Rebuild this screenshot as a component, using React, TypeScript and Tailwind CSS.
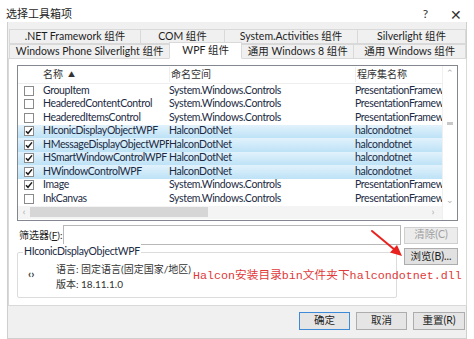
import React from 'react';

const ui = "font-['Lato','Noto_Sans_CJK_SC',sans-serif]";

const rows: [string, string, string, boolean][] = [
  ['GroupItem', 'System.Windows.Controls', 'PresentationFramewo', false],
  ['HeaderedContentControl', 'System.Windows.Controls', 'PresentationFramewo', false],
  ['HeaderedItemsControl', 'System.Windows.Controls', 'PresentationFramewo', false],
  ['HIconicDisplayObjectWPF', 'HalconDotNet', 'halcondotnet', true],
  ['HMessageDisplayObjectWPF', 'HalconDotNet', 'halcondotnet', true],
  ['HSmartWindowControlWPF', 'HalconDotNet', 'halcondotnet', true],
  ['HWindowControlWPF', 'HalconDotNet', 'halcondotnet', true],
  ['Image', 'System.Windows.Controls', 'PresentationFramewo', false],
  ['InkCanvas', 'System.Windows.Controls', 'PresentationFramewo', false],
];

const Check = ({ on }: { on: boolean }) => (
  <div className="w-[10px] h-[10px] border border-[#8a8a8a] bg-white flex items-center justify-center">
    {on && (
      <svg width="8" height="8" viewBox="0 0 8 8"><path d="M1 4.2 L3 6.3 L7 1.4" fill="none" stroke="#1b1b1b" strokeWidth="1.5" /></svg>
    )}
  </div>
);

const Tab = ({ l, w, sel }: { l: string; w: string; sel?: boolean }) => (
  <div className={`${w} flex items-center justify-center border border-[#d9d9d9] -ml-px ${sel ? 'bg-white border-b-white h-[17px] -mt-[2px] relative z-10' : 'bg-[#f0f0f0] h-[15px]'}`}>
    <span className="text-[10.5px] text-[#1e1e1e] whitespace-nowrap">{l}</span>
  </div>
);

const Btn = ({ l, w, dis, def, hl }: { l: string; w: string; dis?: boolean; def?: boolean; hl?: boolean }) => (
  <div className={`${w} flex items-center justify-center border text-[10.5px] ${def ? 'border-[#3c8ad8] bg-[#e5e5e5]' : 'border-[#adadad]'} ${hl ? 'bg-[#e1e1e1]' : 'bg-[#e5e5e5]'} ${dis ? 'text-[#a0a0a0] border-[#cfcfcf] bg-[#ececec]' : 'text-[#1e1e1e]'}`}>
    {l}
  </div>
);

export default function App() {
  return (
    <div className={`w-[474px] h-[339px] overflow-hidden bg-white relative ${ui}`}>
      {/* title bar */}
      <div className="h-[22px] flex items-center pl-[6px] pr-[12px] text-[11px] text-[#1e1e1e]">
        <span className="flex-1 mt-[6px]">选择工具箱项</span>
        <span className="mt-[6px] text-[12px] text-[#333] mr-[22px]">?</span>
        <span className="mt-[6px] text-[14px] text-[#333]">✕</span>
      </div>

      {/* body */}
      <div className="ml-[7px] mr-[7px] h-[317px] bg-[#f0f0f0] border-l border-r border-b border-[#cfcfcf] flex flex-col">
        {/* tabs */}
        <div className="mt-[7px] flex pl-[2px]">
          <Tab l=".NET Framework 组件" w="w-[132px]" />
          <Tab l="COM 组件" w="w-[85px]" />
          <Tab l="System.Activities 组件" w="w-[134px]" />
          <Tab l="Silverlight 组件" w="w-[109px]" />
        </div>
        <div className="flex items-end -mt-px h-[16px]">
          <Tab l="Windows Phone Silverlight 组件" w="w-[162px] ml-px" />
          <Tab l="WPF 组件" w="w-[73px]" sel />
          <Tab l="通用 Windows 8 组件" w="w-[114px]" />
          <Tab l="通用 Windows 组件" w="w-[113px]" />
        </div>

        {/* panel */}
        <div className="-mt-px w-[459px] h-[248px] bg-white border border-[#d9d9d9] flex flex-col px-[8px] pt-[6px]">
          {/* list */}
          <div className="h-[156px] border border-[#828790] flex">
            <div className="flex-1 flex flex-col min-w-0">
              <div className="h-[18px] flex items-center text-[10px] text-[#333] border-b border-[#eeeeee]">
                <div className="w-[25px]" />
                <div className="w-[126px] flex items-center gap-[5px]">名称<span className="text-[7px]">▲</span></div>
                <div className="w-[186px] border-l border-[#eeeeee] pl-px">命名空间</div>
                <div className="flex-1 border-l border-[#eeeeee] pl-px">程序集名称</div>
              </div>
              {rows.map(([n, ns, a, s]) => (
                <div key={n} className={`h-[13.5px] flex items-center text-[10.5px] tracking-[-0.35px] text-[#1c2b44] whitespace-nowrap ${s ? 'bg-gradient-to-b from-[#e2f2fc] to-[#bde2f6]' : ''}`}>
                  <div className="w-[25px] flex pl-[6px]"><Check on={s || n === 'Image'} /></div>
                  <div className="w-[126px] overflow-hidden">{n}</div>
                  <div className="w-[186px] overflow-hidden">{ns}</div>
                  <div className="flex-1 overflow-hidden">{a}</div>
                </div>
              ))}
              <div className="h-[13px] flex items-center bg-[#f4f4f4]">
                <span className="w-[12px] text-center text-[9px] text-[#a0a0a0]">‹</span>
                <div className="w-[178px] h-[10px] bg-[#d6d6d6]" />
                <div className="flex-1" />
                <span className="w-[12px] text-center text-[9px] text-[#a0a0a0] mr-[3px]">›</span>
              </div>
            </div>
            <div className="w-[15px] flex flex-col items-center bg-white border-l border-[#f0f0f0]">
              <span className="text-[9px] text-[#b0b0b0] mt-[2px] leading-none">⌃</span>
              <div className="mt-[45px] w-[6px] h-[3px] bg-[#c8c8c8]" />
              <div className="flex-1" />
              <span className="text-[9px] text-[#b0b0b0] mb-[16px] leading-none">⌄</span>
            </div>
          </div>

          {/* filter */}
          <div className="mt-[4px] flex items-center h-[20px]">
            <span className="w-[46px] text-[10px] text-[#1e1e1e] pl-[2px] whitespace-nowrap">筛选器(<u>F</u>):</span>
            <div className="w-[338px] h-[20px] border border-[#b8b8b8] bg-white" />
            <div className="ml-[3px] h-[17px] flex"><Btn l="清除(C)" w="w-[54px]" dis /></div>
          </div>

          {/* details + browse */}
          <div className="flex mt-[2px]">
            <div className="w-[380px] h-[46px] mt-[5px] border border-[#dcdcdc] rounded-[2px] relative flex items-center">
              <span className="absolute -top-[9px] left-[5px] bg-white px-[1px] text-[10.5px] tracking-[-0.3px] text-[#1c2b44]">HIconicDisplayObjectWPF</span>
              <span className="w-[38px] pl-[10px] text-[11px] font-bold text-[#333] -mt-[1px]">‹›</span>
              <div className="flex flex-col text-[10px] text-[#333] leading-[15px] mt-[4px]">
                <span>语言: 固定语言(固定国家/地区)</span>
                <span>版本: 18.11.1.0</span>
              </div>
            </div>
            <div className="ml-[7px] mt-[1px] h-[17px] flex"><Btn l="浏览(B)..." w="w-[54px]" hl /></div>
          </div>
        </div>

        {/* bottom buttons */}
        <div className="mt-[6px] flex justify-end gap-[6px] pr-[1px] h-[18px]">
          <Btn l="确定" w="w-[51px]" def />
          <Btn l="取消" w="w-[51px]" />
          <Btn l="重置(R)" w="w-[52px]" />
        </div>
      </div>

      {/* annotation */}
      <svg className="absolute left-[368px] top-[228px]" width="40" height="32" viewBox="0 0 40 32">
        <path d="M4 3 L27 22" stroke="#e8231f" strokeWidth="2" strokeLinecap="round" />
        <path d="M34 28 L22 24.5 L29 17 Z" fill="#e8231f" />
      </svg>
      <div className="absolute left-[193px] top-[268px] text-[11.7px] text-[#e03a3a] font-['Liberation_Mono','Noto_Sans_CJK_SC',monospace] whitespace-nowrap">
        Halcon安装目录bin文件夹下halcondotnet.dll
      </div>
    </div>
  );
}
